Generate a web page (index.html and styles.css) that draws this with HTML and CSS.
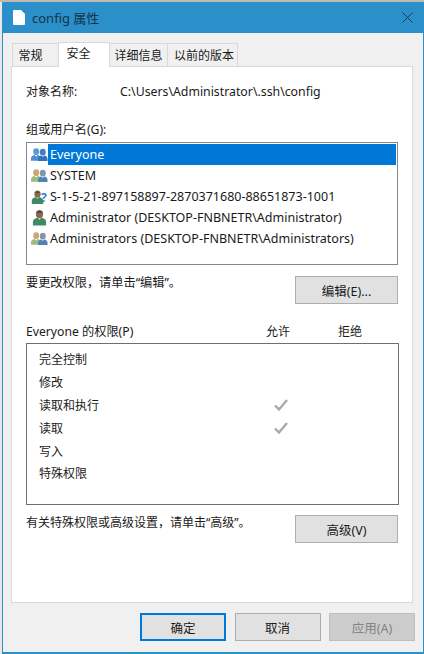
FILE: index.html
```html
<!DOCTYPE html>
<html lang="en">
<head>
  <meta charset="UTF-8">
  <title>config 属性</title>
  <link rel="stylesheet" href="styles.css">
</head>
<body>
  <svg class="defs" width="0" height="0">
    <symbol id="userGreen" viewBox="0 0 16 18">
      <ellipse cx="8" cy="5.500" rx="3.800" ry="4.400" fill="#8a6a4c"/>
      <path d="M4.500 4.500c1-3 6-3.200 7 0-1.500-.8-5.500-.8-7 0z" fill="#3f4a3c"/>
      <path d="M1 17.500v-4c0-2.500 2.800-3.900 5-4.200l2 2 2-2c2.200.3 5 1.700 5 4.200v4z" fill="#3d8a63"/>
    </symbol>
    <symbol id="group" viewBox="0 0 18 15">
      <ellipse cx="5.500" cy="4.500" rx="3.200" ry="3.600" fill="#c9a875"/>
      <path d="M0 14v-2.500C0 9.500 2 8.300 3.800 8l1.700 1.500L7.200 8C9 8.300 10 9.500 10 11.500V14z" fill="#9fbb7c"/>
      <ellipse cx="12.500" cy="5" rx="3.100" ry="3.500" fill="#7f95a8"/>
      <path d="M7.500 14.500v-2.500c0-2 1.800-3.200 3.400-3.500l1.600 1.500 1.600-1.500c1.600.3 3.400 1.500 3.400 3.500v2.500z" fill="#4f83b5"/>
    </symbol>
    <symbol id="groupSel" viewBox="0 0 18 15">
      <ellipse cx="5.500" cy="4.500" rx="3.200" ry="3.600" fill="#5c9ad6"/>
      <path d="M0 14v-2.500C0 9.500 2 8.300 3.800 8l1.700 1.500L7.200 8C9 8.300 10 9.500 10 11.500V14z" fill="#4f8fd0"/>
      <ellipse cx="12.500" cy="5" rx="3.100" ry="3.500" fill="#3f7fc4"/>
      <path d="M7.500 14.500v-2.500c0-2 1.800-3.200 3.400-3.500l1.600 1.500 1.600-1.500c1.600.3 3.400 1.500 3.400 3.500v2.500z" fill="#2f74c0"/>
    </symbol>
    <symbol id="check" viewBox="0 0 14 12">
      <path d="M1 6.500l4 4L13 1" fill="none" stroke="#a9a9a9" stroke-width="2.400"/>
    </symbol>
  </svg>

  <div class="window">
    <div class="titlebar">
      <svg class="file-icon" width="12" height="15" viewBox="0 0 12 15">
        <path d="M0 1a1 1 0 0 1 1-1h7l4 4v10a1 1 0 0 1-1 1H1a1 1 0 0 1-1-1z" fill="#fff"/>
      </svg>
      <span class="title-text">config 属性</span>
      <svg class="close-icon" width="11" height="11" viewBox="0 0 11 11">
        <path d="M.5.500l10 10M10.500.500l-10 10" stroke="#1c3f55" stroke-width="1" fill="none"/>
      </svg>
    </div>

    <div class="tabs">
      <div class="tab tab-general">常规</div>
      <div class="tab tab-active">安全</div>
      <div class="tab tab-details">详细信息</div>
      <div class="tab tab-versions">以前的版本</div>
    </div>

    <div class="panel">
      <div class="object-row">
        <span class="object-label">对象名称:</span>
        <span class="object-path">C:\Users\Administrator\.ssh\config</span>
      </div>

      <div class="group-label">组或用户名(G):</div>
      <div class="user-list">
        <div class="user-row selected-row">
          <svg class="user-icon" width="17" height="15"><use href="#groupSel"/></svg>
          <span class="user-name">Everyone</span>
        </div>
        <div class="user-row">
          <svg class="user-icon" width="17" height="15"><use href="#group"/></svg>
          <span class="user-name">SYSTEM</span>
        </div>
        <div class="user-row">
          <span class="unknown-icon">
            <svg width="13" height="16"><use href="#userGreen"/></svg>
            <span class="question">?</span>
          </span>
          <span class="user-name">S-1-5-21-897158897-2870371680-88651873-1001</span>
        </div>
        <div class="user-row">
          <svg class="user-icon" width="17" height="17"><use href="#userGreen"/></svg>
          <span class="user-name">Administrator (DESKTOP-FNBNETR\Administrator)</span>
        </div>
        <div class="user-row">
          <svg class="user-icon" width="17" height="15"><use href="#group"/></svg>
          <span class="user-name">Administrators (DESKTOP-FNBNETR\Administrators)</span>
        </div>
      </div>

      <div class="action-row edit-row">
        <span class="action-note">要更改权限，请单击“编辑”。</span>
        <button class="btn">编辑(E)...</button>
      </div>

      <div class="perm-header">
        <span class="perm-title">Everyone 的权限(P)</span>
        <span class="perm-col">允许</span>
        <span class="perm-col">拒绝</span>
      </div>
      <div class="perm-list">
        <div class="perm-row"><span class="perm-name">完全控制</span></div>
        <div class="perm-row"><span class="perm-name">修改</span></div>
        <div class="perm-row"><span class="perm-name">读取和执行</span><svg class="perm-check" width="14" height="12"><use href="#check"/></svg></div>
        <div class="perm-row"><span class="perm-name">读取</span><svg class="perm-check" width="14" height="12"><use href="#check"/></svg></div>
        <div class="perm-row"><span class="perm-name">写入</span></div>
        <div class="perm-row"><span class="perm-name">特殊权限</span></div>
      </div>

      <div class="action-row advanced-row">
        <span class="action-note">有关特殊权限或高级设置，请单击“高级”。</span>
        <button class="btn">高级(V)</button>
      </div>
    </div>

    <div class="footer">
      <button class="btn footer-btn btn-default">确定</button>
      <button class="btn footer-btn">取消</button>
      <button class="btn footer-btn btn-disabled">应用(A)</button>
    </div>
  </div>
</body>
</html>
```

FILE: styles.css
```css
html, body {margin:0; padding:0;}
body {width:424px; height:654px; overflow:hidden; background:linear-gradient(#bdbab4 2px, #e9e9e9 2px); font-family:"Noto Sans","Noto Sans CJK SC",sans-serif; font-size:12px; color:#1a1a1a;}
.defs {display:block; height:0;}

/* Window frame */
.window {box-sizing:border-box; width:422px; height:652px; margin:2px 0 0 2px; background:#f0f0f0; border:solid #2b90c9; border-width:0 1px 2px 1px; display:flex; flex-direction:column;}
.titlebar {flex:0 0 31px; background:#2b90c9; display:flex; align-items:center; padding:0 10px 0 10px; font-size:13px; color:#15354a;}
.file-icon {margin-right:7px;}
.title-text {flex:1;}

/* Tabs */
.tabs {display:flex; align-items:flex-end; height:33px; padding-left:10px; box-sizing:border-box;}
.tab {box-sizing:border-box; height:23px; line-height:23px; text-align:center; background:#f0f0f0; border:1px solid #d9d9d9; border-bottom:none; margin-left:-1px;}
.tab-general {width:47px; padding-right:10px;}
.tab-active {width:52px; height:25px; line-height:22px; background:#fff; margin-bottom:-1px; position:relative; z-index:1; padding-right:11px;}
.tab-details {width:59px;}
.tab-versions {width:71px; padding-left:3px;}

/* Main panel */
.panel {box-sizing:border-box; width:402px; height:537px; margin-left:8px; background:#fff; border:1px solid #d9d9d9; padding:0 14px 0 14px;}
.object-row {display:flex; margin-top:16px; height:18px; line-height:18px;}
.object-label {width:94px;}
.object-path {font-size:12.3px;}
.group-label {margin-top:20px; height:18px; line-height:18px; font-size:12.2px;}
.user-list {box-sizing:border-box; height:123px; margin-top:3px; border:1px solid #828790; padding:1px; font-size:12.5px;}
.user-row {display:flex; align-items:center; height:21px;}
.user-icon {margin-left:3px; flex:none;}
.unknown-icon {width:20px; height:16px; flex:none; position:relative;}
.unknown-icon svg {margin-left:3px; display:block;}
.question {position:absolute; left:13px; top:1px; color:#2a7fd4; font-weight:bold; font-size:12px; line-height:16px;}
.user-name {padding:0 2px; white-space:nowrap;}
.selected-row .user-name {flex:1; background:#0078d7; color:#fff; line-height:21px;}

/* Edit / advanced rows */
.action-row {display:flex; justify-content:space-between; align-items:flex-start;}
.edit-row {margin-top:11px; margin-bottom:19px;}
.edit-row .action-note {font-size:12.2px;}
.advanced-row {margin-top:10px;}
.advanced-row .action-note {padding-top:1px;}
.action-note {line-height:14px;}
.btn {box-sizing:border-box; width:103px; height:28px; padding:0; background:#e1e1e1; border:1px solid #adadad; font:inherit; font-size:12.5px; color:#1a1a1a;}

/* Permissions */
.perm-header {display:flex; height:18px; line-height:18px;}
.perm-title {width:216px; font-size:12.2px;}
.perm-col {width:72px; padding-left:24px; box-sizing:border-box;}
.perm-list {box-sizing:border-box; width:373px; height:162px; margin-top:2px; border:1px solid #6f6f6f; padding-top:4px;}
.perm-row {display:flex; align-items:center; height:22.8px; padding-left:12px;}
.perm-name {width:235px;}
.perm-check {display:block;}

/* Bottom buttons */
.footer {display:flex; justify-content:flex-end; gap:8.5px; padding:10px 8px 0 0;}
.footer-btn {width:86px;}
.btn-default {border:2px solid #0078d7;}
.btn-disabled {background:#ccc; border-color:#bfbfbf; color:#838383;}
```
